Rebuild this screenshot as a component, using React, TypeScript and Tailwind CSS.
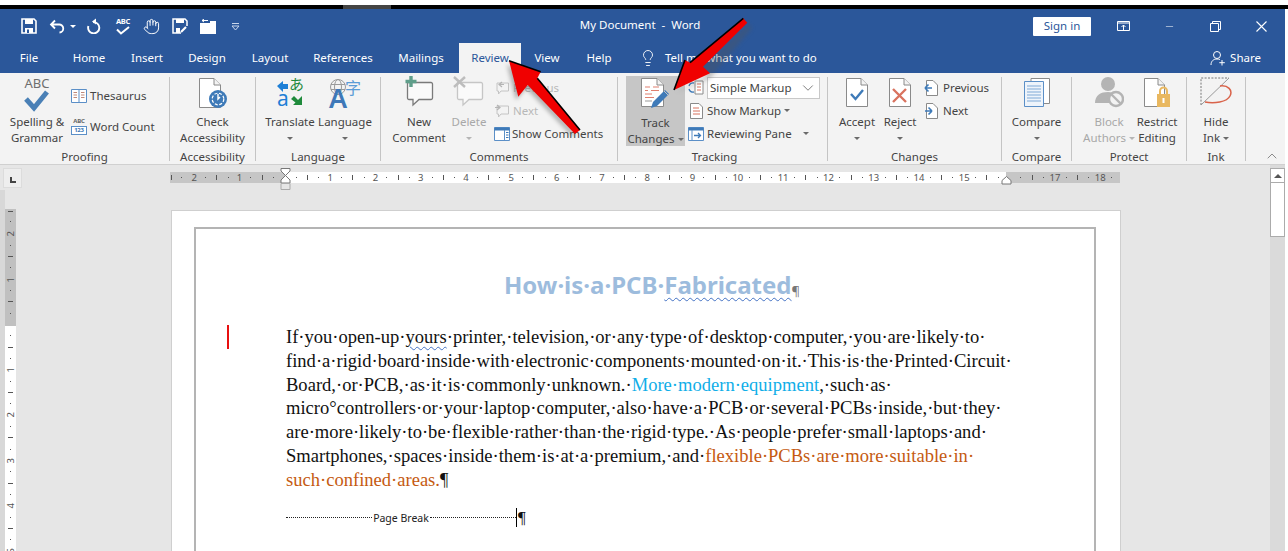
import type { ReactNode } from 'react'
import { Hand, Lightbulb, ChevronDown, ChevronUp, Minus } from 'lucide-react'

// small triangle used on every split button
function Caret({ className = 'border-t-[#6a6a6a]' }: { className?: string }) {
  return <span className={`inline-block h-0 w-0 border-x-[3px] border-t-[3px] border-x-transparent ${className}`} />
}

function Page({ x = 1, w = 24, h = 30, children, stroke = '#8a8a8a' }: { x?: number; w?: number; h?: number; children?: ReactNode; stroke?: string }) {
  return (
    <g>
      <path d={`M${x + .5} .5H${x + w - 7}L${x + w - .5} 7V${h - .5}H${x + .5}Z`} fill="#fff" stroke={stroke} />
      <path d={`M${x + w - 7} .5V7H${x + w - .5}`} fill="#f3f3f3" stroke={stroke} />
      {children}
    </g>
  )
}

function Bubble({ stroke, x = 0, y = 0 }: { stroke: string; x?: number; y?: number }) {
  return <path transform={`translate(${x} ${y})`} d="M1.5 1.5H25a1.5 1.5 0 0 1 1.5 1.5V17a1.5 1.5 0 0 1-1.5 1.5H13L7 24V18.5H3A1.5 1.5 0 0 1 1.5 17Z" fill="#fafafa" stroke={stroke} strokeWidth="1.3" />
}

function SmallBubble({ dir }: { dir: 'prev' | 'next' }) {
  return (
    <svg width="16" height="16" viewBox="0 0 16 16" fill="none">
      <path d="M3 3H14.5V11H7L4.5 14V11H3Z" stroke="#c4c4c4" />
      <path d={dir === 'prev' ? 'M8 2L5 4.5L8 7M5 4.5H10' : 'M3 2L6 4.5L3 7M1 4.5H6'} stroke="#b4b4b4" strokeWidth="1.2" />
    </svg>
  )
}

function BigBtn({ icon, lines, w, caret, disabled, className = '' }: { icon: ReactNode; lines: string[]; w: string; caret?: 'inline' | 'below'; disabled?: boolean; className?: string }) {
  const color = disabled ? 'text-[#a8a8a8]' : 'text-[#444]'
  return (
    <div className={`flex shrink-0 flex-col items-center whitespace-nowrap ${w} ${color} ${className}`}>
      <div className="flex h-[36px] items-start justify-center">{icon}</div>
      {lines.map((l, i) => (
        <div key={l} className="flex h-[16px] items-center gap-[3px] leading-[16px]">
          {l}
          {caret === 'inline' && i === lines.length - 1 && <Caret className={disabled ? 'border-t-[#b5b5b5]' : undefined} />}
        </div>
      ))}
      {caret === 'below' && <div className="flex h-[16px] items-center"><Caret className={disabled ? 'border-t-[#b5b5b5]' : undefined} /></div>}
    </div>
  )
}

function Group({ w, label, children, labelClass = '' }: { w: string; label: string; children: ReactNode; labelClass?: string }) {
  return (
    <div className={`my-[4px] flex h-[84px] shrink-0 flex-col border-r border-[#c4c4c4] ${w}`}>
      <div className="flex h-[72px] shrink-0 pt-[1px]">{children}</div>
      <div className={`flex h-[15px] shrink-0 items-center justify-center leading-[15px] text-[#444] ${labelClass}`}>{label}</div>
    </div>
  )
}

function Row({ icon, children, disabled }: { icon: ReactNode; children: ReactNode; disabled?: boolean }) {
  return (
    <div className={`flex h-[23px] items-center gap-[3px] whitespace-nowrap ${disabled ? 'text-[#b8b8b8]' : 'text-[#444]'}`}>
      <span className="flex w-[16px] shrink-0 justify-center">{icon}</span>
      {children}
    </div>
  )
}

const Dot = () => <span className="flex w-1/4 justify-center"><span className="h-[1px] w-[1px] bg-[#555]" /></span>
const Tick = () => <span className="flex w-1/4 justify-center"><span className="h-[5px] w-[1px] bg-[#555]" /></span>
const VDot = () => <span className="flex h-1/4 items-center justify-center"><span className="h-[1px] w-[1px] bg-[#555]" /></span>
const VTick = () => <span className="flex h-1/4 items-center justify-center"><span className="h-[1px] w-[5px] bg-[#555]" /></span>

const hNums = ['2', '1', '', '1', '2', '3', '4', '5', '6', '7', '8', '9', '10', '11', '12', '13', '14', '15', '', '17']
const vNums = ['2', '1', '', '1', '2', '3', '4', '5']

function HRuler() {
  return (
    <div className="flex h-[11px] w-[950px] items-center bg-[linear-gradient(to_right,#c6c6c6_115px,#fff_115px,#fff_836px,#c6c6c6_836px)] text-[9.5px] leading-[11px] text-[#555]">
      <div className="flex w-[18.6px] shrink-0 items-center justify-between pl-[1px] pr-[7px]"><span className="h-[5px] w-[1px] bg-[#555]" /><span className="h-[1px] w-[1px] bg-[#555]" /></div>
      {hNums.map((n, i) => (
        <div key={i} className="flex w-[45.3px] shrink-0 items-center">
          <span className="w-1/4 text-center">{n}</span><Dot /><Tick /><Dot />
        </div>
      ))}
      {/* last number: the bar stops just past it */}
      <div className="flex w-[25.4px] shrink-0 items-center">
        <span className="w-[11.3px] text-center">18</span><span className="ml-[5px] h-[1px] w-[1px] bg-[#555]" />
      </div>
    </div>
  )
}

function VRuler() {
  return (
    <div className="mt-[19px] h-[400px] w-[11px] bg-[linear-gradient(to_bottom,#c0c0c0_117px,#fff_117px)] text-[9.5px] leading-[11px] text-[#555]">
      <div className="flex h-[19.3px] flex-col justify-between pb-[6px] pt-[2px]"><span className="mx-auto h-[1px] w-[5px] bg-[#555]" /><span className="mx-auto h-[1px] w-[1px] bg-[#555]" /></div>
      {vNums.map((n, i) => (
        <div key={i} className="flex h-[45.3px] flex-col">
          <span className="flex h-1/4 -rotate-90 items-center justify-center">{n}</span><VDot /><VTick /><VDot />
        </div>
      ))}
    </div>
  )
}

const wavy = 'underline decoration-wavy decoration-[#4472c4] decoration-1 underline-offset-[3px]'

export default function App() {
  return (
    <div className="relative h-[551px] w-[1288px] overflow-hidden bg-white font-['Noto_Sans',sans-serif] text-[11.5px]">
      <div className="mt-[5px] flex h-[4px] bg-black"><div className="ml-[343px] w-[48px] bg-[#444]" /></div>

      <div className="w-[1285px]">
        {/* title bar */}
        <div className="flex h-[34px] items-center bg-[#2b579a] text-white">
          <div className="ml-[21px] flex w-[224px] shrink-0 items-center">
            <svg width="16" height="16" viewBox="0 0 16 16" fill="none"><path d="M1 1H13L15 3V15H1Z" stroke="#fff" strokeWidth="1.6" /><path d="M4 1H12V6H4Z" fill="#fff" /><path d="M4 10H12V15H4Z" fill="#fff" /><path d="M6 11.5H8V15H6Z" fill="#2b579a" /></svg>
            <svg className="ml-[12px]" width="16" height="16" viewBox="0 0 16 16" fill="none"><path d="M6 2.5L2 6.5L6 10.5M2 6.5H10A4 4 0 0 1 10.5 14.5" stroke="#fff" strokeWidth="1.8" /></svg>
            <span className="ml-[5px] flex"><Caret className="border-t-white" /></span>
            <svg className="ml-[10px]" width="16" height="16" viewBox="0 0 16 16" fill="none"><path d="M7 4.2A5.6 5.6 0 1 1 2.4 8" stroke="#fff" strokeWidth="1.9" /><path d="M10 .5V6.5L6 3.5Z" fill="#fff" /></svg>
            <div className="ml-[14px] flex h-[18px] w-[14px] flex-col items-center">
              <span className="text-[7.5px] font-bold leading-[9px] tracking-[-0.3px]">ABC</span>
              <svg width="14" height="9" viewBox="0 0 14 9" fill="none"><path d="M1 3.5L5 7.5L13 1" stroke="#fff" strokeWidth="2" /></svg>
            </div>
            <Hand className="ml-[13px]" size={17} strokeWidth={1.4} />
            <svg className="ml-[12px]" width="16" height="16" viewBox="0 0 16 16" fill="none"><path d="M9 15H1V1H13L15 3V8" stroke="#fff" strokeWidth="1.5" /><path d="M4 1H12V5H4Z" fill="#fff" /><path d="M4 10H8V15H4Z" fill="#fff" /><path d="M9 14L14 9" stroke="#fff" strokeWidth="2.2" /></svg>
            <svg className="ml-[12px]" width="16" height="15" viewBox="0 0 16 15" fill="none"><path d="M0 4H16V15H0Z" fill="#fff" /><path d="M8 1.5H2M4 0L2 1.5L4 3" stroke="#fff" /><path d="M10 2H16V4H10Z" fill="#fff" /></svg>
            <svg className="ml-[15px]" width="9" height="9" viewBox="0 0 9 9" fill="none"><path d="M1 1.5H8" stroke="#c9d6ea" /><path d="M1 4L4.5 8L8 4Z" stroke="#c9d6ea" /></svg>
          </div>
          <div className="ml-[333px] w-[124px] -translate-y-[1px] whitespace-pre text-center">My Document  -  Word</div>
          <div className="ml-[331px] flex h-[19px] w-[58px] items-center justify-center rounded-[1px] bg-white text-[#2b579a]">Sign in</div>
          <svg className="ml-[26px]" width="13" height="10" viewBox="0 0 13 10" fill="none"><path d="M.5 .5H12.5V9.5H.5Z" stroke="#fff" /><path d="M.5 2H12.5" stroke="#fff" /><path d="M6.5 9V4M4.5 6L6.5 4L8.5 6" stroke="#fff" /></svg>
          <Minus className="ml-[34px]" size={11} strokeWidth={1.2} />
          <svg className="ml-[35px]" width="11" height="11" viewBox="0 0 11 11" fill="none"><path d="M.5 2.5H8.5V10.5H.5Z" stroke="#fff" /><path d="M2.5 2.5V.5H10.5V8.5H8.5" stroke="#fff" /></svg>
          <svg className="ml-[35px]" width="11" height="11" viewBox="0 0 11 11" fill="none"><path d="M.5 .5L10.5 10.5M10.5 .5L.5 10.5" stroke="#fff" strokeWidth="1.1" /></svg>
        </div>

        {/* tabs */}
        <div className="flex h-[30px] items-stretch bg-[#2b579a] text-white">
          {[['File', 'w-[58px]'], ['Home', 'w-[62px]'], ['Insert', 'w-[54px]'], ['Design', 'w-[66px]'], ['Layout', 'w-[60px]'], ['References', 'w-[86px]'], ['Mailings', 'w-[70px]']].map(([t, w]) => (
            <div key={t} className={`flex items-center justify-center ${w}`}>{t}</div>
          ))}
          <div className="ml-[3px] flex w-[62px] items-center justify-center bg-[#f3f3f3] text-[#2b579a]">Review</div>
          <div className="flex w-[52px] items-center justify-center">View</div>
          <div className="flex w-[52px] items-center justify-center">Help</div>
          <div className="ml-[14px] flex items-center gap-[8px]">
            <Lightbulb size={18} strokeWidth={1.2} />
            <span>Tell me what you want to do</span>
          </div>
          <div className="ml-auto mr-[24px] flex items-center gap-[4px]">
            <svg width="16" height="16" viewBox="0 0 16 16" fill="none"><circle cx="7" cy="5" r="3.5" stroke="#fff" /><path d="M1 15C1 11 3.5 9 7 9C8 9 9 9.2 9.8 9.6" stroke="#fff" /><path d="M12 10V15.5M9.3 12.7H14.8" stroke="#fff" /></svg>
            <span>Share</span>
          </div>
        </div>

        {/* ribbon */}
        <div className="flex h-[92px] border-b border-[#d0d0d0] bg-[#f3f3f3]">
          <Group w="w-[170px]" label="Proofing">
            <BigBtn w="w-[74px]" lines={['Spelling &', 'Grammar']} icon={
              <div className="-mt-[1px] flex w-[30px] flex-col items-center">
                <span className="text-[13px] leading-[13px] text-[#6e6e6e]">ABC</span>
                <svg width="26" height="22" viewBox="0 0 26 22" fill="none"><path d="M2 9L10 18L23 2" stroke="#4a80b6" strokeWidth="5" /></svg>
              </div>
            } />
            <div className="-ml-[3px] flex flex-col gap-[8px] pt-[6px]">
              <Row icon={
                <svg width="16" height="14" viewBox="0 0 16 14" fill="none"><path d="M.5 .5H15.5V13.5H.5Z" fill="#fff" stroke="#5b8fc7" /><path d="M8 1V13" stroke="#5b8fc7" /><path d="M2.5 3.5H6M2.5 6H6M2.5 8.5H6M10 3.5H13.5M10 6H13.5M10 8.5H13.5" stroke="#c08a7a" /></svg>
              }>Thesaurus</Row>
              <Row icon={
                <div className="flex w-[16px] flex-col items-center">
                  <span className="text-[6px] font-bold leading-[7px] tracking-[-0.2px] text-[#666]">ABC</span>
                  <span className="mt-[1px] w-[16px] border border-[#5b8fc7] bg-white text-center text-[6px] font-bold leading-[7px] tracking-[-0.2px] text-[#3a76b5]">123</span>
                </div>
              }>Word Count</Row>
            </div>
          </Group>

          <Group w="w-[86px]" label="Accessibility">
            <BigBtn w="w-[85px]" lines={['Check', 'Accessibility']} icon={
              <svg width="30" height="30" viewBox="0 0 30 30" fill="none">
                <Page w={22}><circle cx="20" cy="21" r="9" fill="#3e7ab8" /><circle cx="20" cy="21" r="5.8" stroke="#fff" strokeWidth="1.2" strokeDasharray="3 1.6" /><path d="M20 16V21L22 19" stroke="#fff" strokeWidth="1.4" /></Page>
              </svg>
            } />
          </Group>

          <Group w="w-[125px]" label="Language">
            <BigBtn className="ml-[6px]" w="w-[56px]" lines={['Translate']} caret="below" icon={
              <div className="relative h-[32px] w-[28px] font-['Noto_Sans_CJK_JP',sans-serif]">
                <span className="absolute left-[13px] top-[-2px] text-[15px] leading-[16px] text-[#1f8a3b]">あ</span>
                <span className="absolute left-[1px] top-[9px] font-['Noto_Sans',sans-serif] text-[21px] leading-[22px] text-[#1e7fd6]">a</span>
                <svg className="absolute left-0 top-0" width="28" height="32" viewBox="0 0 28 32"><path d="M1 8L7 3V6H12V11H7V14Z" fill="#1e7fd6" /><path d="M26 18V27H17L19.5 24.5L15 21L18 18L22 22Z" fill="#1f8a3b" /></svg>
              </div>
            } />
            <BigBtn w="w-[54px]" lines={['Language']} caret="below" icon={
              <div className="relative h-[32px] w-[32px] font-['Noto_Sans_CJK_SC',sans-serif]">
                <svg className="absolute left-0 top-0" width="18" height="18" viewBox="0 0 18 18" fill="none"><circle cx="9" cy="9" r="7.5" stroke="#9a9a9a" /><ellipse cx="9" cy="9" rx="3.5" ry="7.5" stroke="#9a9a9a" /><path d="M2 6.5H16M2 11.5H16" stroke="#9a9a9a" /></svg>
                <span className="absolute left-[16px] top-[0px] text-[16px] leading-[18px] text-[#5a9bd6]">字</span>
                <span className="absolute left-[0px] top-[6px] font-['Noto_Sans',sans-serif] text-[27px] font-semibold leading-[28px] text-[#3e78b8]">A</span>
              </div>
            } />
          </Group>

          <Group w="w-[237px]" label="Comments">
            <BigBtn w="w-[76px]" lines={['New', 'Comment']} icon={
              <svg className="-mt-[3px]" width="32" height="32" viewBox="0 0 32 32" fill="none"><Bubble stroke="#7a7a7a" x={3} y={6} /><path d="M8 1V12M2.5 6.5H13.5" stroke="#5f9e8a" strokeWidth="3.4" /></svg>
            } />
            <BigBtn w="w-[24px]" disabled lines={['Delete']} caret="below" icon={
              <svg className="-mt-[3px]" width="32" height="32" viewBox="0 0 32 32" fill="none"><Bubble stroke="#c6c6c6" x={3} y={6} /><path d="M1 2L12 12M12 2L1 12" stroke="#bdbdbd" strokeWidth="2.4" /></svg>
            } />
            <div className="ml-[13px] flex -translate-y-[2px] flex-col">
              <Row disabled icon={<SmallBubble dir="prev" />}>Previous</Row>
              <Row disabled icon={<SmallBubble dir="next" />}>Next</Row>
              <Row icon={
                <svg width="16" height="14" viewBox="0 0 16 14" fill="none"><path d="M.5 .5H15.5V13.5H.5Z" fill="#fff" stroke="#5b8fc7" /><path d="M.5 2H15.5" stroke="#3e7ab8" strokeWidth="3" /><path d="M10.5 3V13" stroke="#5b8fc7" /><path d="M12 5.5H14.5M12 8H14.5M12 10.5H14.5" stroke="#3e7ab8" /></svg>
              }><span className="-ml-[1px]">Show Comments</span></Row>
            </div>
          </Group>

          <Group w="w-[210px]" label="Tracking" labelClass="pr-[16px]">
            <div className="ml-[8px] -mt-[2px] h-[70px] w-[59px] shrink-0 bg-[#c6c6c6] pt-[3px]">
              <BigBtn w="w-[59px]" lines={['Track', 'Changes']} caret="inline" icon={
                <svg className="-mt-[1px]" width="32" height="32" viewBox="0 0 32 32" fill="none">
                  <Page x={1} w={23} h={29}>
                    <path d="M5 9H10M13 9H19M5 12.5H8M11 12.5H19M5 16H12M5 19.5H14" stroke="#e08070" strokeWidth="1.2" />
                    <path d="M5 23H12" stroke="#aaa" strokeWidth="1.2" />
                  </Page>
                  <path d="M11 30L13 24L25 12L29 16L17 28Z" fill="#3e7ab8" />
                  <path d="M24 13L28 17" stroke="#c6c6c6" />
                </svg>
              } />
            </div>
            <div className="ml-[3px] flex -translate-y-[2px] flex-col">
              <div className="flex h-[23px] items-center gap-[3px] whitespace-nowrap text-[#444]">
                <svg width="16" height="16" viewBox="0 0 16 16" fill="none"><path d="M7 1H15V14H7Z" fill="#fff" stroke="#8a8a8a" /><path d="M9 4H13M9 7H13M9 10H13" stroke="#d9735f" /><path d="M1 6A4 4 0 0 1 6 3M6 12A4 4 0 0 1 1 9" stroke="#3e7ab8" strokeWidth="1.3" /></svg>
                <div className="flex h-[22px] w-[113px] items-center justify-between border border-[#c8c8c8] bg-white pl-[2px] pr-[2px]">
                  Simple Markup <ChevronDown size={18} strokeWidth={1} className="text-[#555]" />
                </div>
              </div>
              <Row icon={
                <svg width="13" height="16" viewBox="0 0 13 16" fill="none"><path d="M.5 .5H9L12.5 4V15.5H.5Z" fill="#fff" stroke="#8a8a8a" /><path d="M3 5H9M3 8H10M3 11H10" stroke="#d9735f" /></svg>
              }>Show Markup <Caret /></Row>
              <Row icon={
                <svg width="16" height="14" viewBox="0 0 16 14" fill="none"><path d="M.5 .5H15.5V13.5H.5Z" fill="#fff" stroke="#5b8fc7" /><path d="M.5 2H15.5" stroke="#3e7ab8" strokeWidth="3" /><path d="M4 3V13" stroke="#5b8fc7" /><path d="M6 8.5H12M10 6L12.5 8.5L10 11" stroke="#3e7ab8" strokeWidth="1.3" /></svg>
              }>Reviewing Pane <span className="ml-[8px] flex"><Caret /></span></Row>
            </div>
          </Group>

          <Group w="w-[174px]" label="Changes">
            <BigBtn w="w-[58px]" lines={['Accept']} caret="below" icon={
              <svg width="24" height="30" viewBox="0 0 24 30" fill="none"><Page x={1} w={22} h={29}><path d="M6 16L10.5 21L18 12" stroke="#3e7ab8" strokeWidth="2.4" /></Page></svg>
            } />
            <BigBtn w="w-[28px]" lines={['Reject']} caret="below" icon={
              <svg width="24" height="30" viewBox="0 0 24 30" fill="none"><Page x={1} w={22} h={29}><path d="M5 11L18 24M18 11L5 24" stroke="#d9735f" strokeWidth="2.4" /></Page></svg>
            } />
            <div className="ml-[9px] flex -translate-y-[2px] flex-col">
              <Row icon={
                <svg width="14" height="16" viewBox="0 0 14 16" fill="none"><path d="M2.5 .5H9L13.5 5V15.5H2.5Z" fill="#fff" stroke="#8a8a8a" /><path d="M1 8H8M1 8L4.5 4.5M1 8L4.5 11.5" stroke="#3e7ab8" strokeWidth="1.6" /></svg>
              }><span className="ml-[1px]">Previous</span></Row>
              <Row icon={
                <svg width="14" height="16" viewBox="0 0 14 16" fill="none"><path d="M2.5 .5H9L13.5 5V15.5H2.5Z" fill="#fff" stroke="#8a8a8a" /><path d="M1 8H8M8 8L4.5 4.5M8 8L4.5 11.5" stroke="#3e7ab8" strokeWidth="1.6" /></svg>
              }><span className="ml-[1px]">Next</span></Row>
            </div>
          </Group>

          <Group w="w-[70px]" label="Compare">
            <BigBtn w="w-[69px]" lines={['Compare']} caret="below" icon={
              <svg width="26" height="30" viewBox="0 0 26 30" fill="none"><path d="M7 .5H25.5V25.5H7Z" fill="#fff" stroke="#8a8a8a" /><path d="M.5 3.5H19.5V28.5H.5Z" fill="#eef4fb" stroke="#5b8fc7" /><path d="M3 8H17M3 11H17M3 14H17M3 17H17M3 20H17M3 23H17" stroke="#7fa9d6" /></svg>
            } />
          </Group>

          <Group w="w-[115px]" label="Protect">
            <BigBtn w="w-[74px]" disabled lines={['Block', 'Authors']} caret="inline" icon={
              <svg className="-mt-[2px]" width="30" height="32" viewBox="0 0 30 32" fill="none"><circle cx="14" cy="8" r="7" fill="#b4b4b4" /><path d="M1 27C1 19 7 16 14 16C20 16 24 19 24 27Z" fill="#b4b4b4" /><circle cx="22" cy="23" r="7" fill="#f3f3f3" stroke="#b4b4b4" strokeWidth="2.4" /><path d="M17 18L27 28" stroke="#b4b4b4" strokeWidth="2.4" /></svg>
            } />
            <BigBtn w="w-[22px]" lines={['Restrict', 'Editing']} icon={
              <svg width="28" height="30" viewBox="0 0 28 30" fill="none"><Page x={1} w={21} h={29} /><path d="M14 16H27V29H14Z" fill="#e9b860" /><path d="M17 16V13A3.5 3.5 0 0 1 24 13V16" stroke="#e9b860" strokeWidth="2" /><path d="M20.5 20V25" stroke="#fff" strokeWidth="2" /></svg>
            } />
          </Group>

          <Group w="w-[59px]" label="Ink">
            <BigBtn w="w-[58px]" lines={['Hide', 'Ink']} caret="inline" icon={
              <svg className="-mt-[1px]" width="32" height="30" viewBox="0 0 32 30" fill="none"><path d="M1 28V1H29" stroke="#777" strokeDasharray="2 1.4" /><path d="M29 1L1 28" stroke="#999" /><path d="M20 9C28 8 33 13 30 19C27 25 14 27 5 25" stroke="#d9634a" strokeWidth="1.5" /></svg>
            } />
          </Group>
          <div className="flex flex-1 items-end justify-end pb-[0px] pr-[5px]"><ChevronUp size={16} strokeWidth={1} className="text-[#555]" /></div>
        </div>

        {/* document area */}
        <div className="flex h-[386px] bg-[#e6e6e6]">
          <div className="flex w-[1270px] flex-col">
            <div className="flex h-[25px] shrink-0 items-center">
              <div className="ml-[3px] flex h-[20px] w-[19px] items-end justify-center border border-[#dcdcdc] bg-[#eeeeee] pb-[4px]">
                <span className="h-[6px] w-[6px] border-b-2 border-l-2 border-[#444]" />
              </div>
              <div className="ml-[148px]"><HRuler /></div>
            </div>
            <div className="flex min-h-0 flex-1">
              <div className="ml-0 flex w-[5px] bg-[#d8d8d8]" />
              <VRuler />
              <div className="ml-[155px] mt-[20px] h-[400px] w-[950px] shrink-0 border border-[#cfcfcf] bg-white pl-[22px] pt-[16px]">
                <div className="h-[400px] w-[902px] border-l-2 border-r-2 border-t-2 border-[#b4b4b4] pl-[90px] pr-[10px] pt-[41px]">
                  <h1 className="-ml-[90px] -mr-[10px] pl-[14px] text-center text-[24px] font-bold leading-[30px] text-[#9dbcdd]">
                    How·is·a·PCB·<span className={wavy}>Fabricated</span><span className="align-[-2px] text-[13px] font-normal text-[#777]">¶</span>
                  </h1>
                  <p className="relative mt-[19px] whitespace-nowrap font-['Liberation_Serif',serif] text-[18.56px] leading-[23.8px] text-[#111]">
                    <span className="absolute -left-[59px] top-0 h-[24px] w-[1.5px] bg-[#e81010]" />
                    If·you·open-up·<span className={wavy}>yours</span>·printer,·television,·or·any·type·of·desktop·computer,·you·are·likely·to·<br />
                    find·a·rigid·board·inside·with·electronic·components·mounted·on·it.·This·is·the·Printed·Circuit·<br />
                    Board,·or·PCB,·as·it·is·commonly·unknown.·<span className="text-[#10aee8]">More·modern·equipment</span>,·such·as·<br />
                    micro°controllers·or·your·laptop·computer,·also·have·a·PCB·or·several·PCBs·inside,·but·they·<br />
                    are·more·likely·to·be·flexible·rather·than·the·rigid·type.·As·people·prefer·small·laptops·and·<br />
                    Smartphones,·spaces·inside·them·is·at·a·premium,·and·<span className="text-[#c55a11]">flexible·PCBs·are·more·suitable·in·</span><br />
                    <span className="text-[#c55a11]">such·confined·areas.</span>¶
                  </p>
                  <div className="mt-[18px] flex h-[16px] items-center font-['Noto_Sans',sans-serif] text-[10.5px] leading-[16px] text-[#222]">
                    <span className="w-[86px] border-t border-dotted border-[#222]" />
                    <span className="w-[58px] whitespace-nowrap text-center">Page Break</span>
                    <span className="w-[86px] border-t border-dotted border-[#222]" />
                    <span className="h-[19px] w-[1px] bg-black" />
                    <span className="ml-[1px] font-['Liberation_Serif',serif] text-[17px] text-[#111]">¶</span>
                  </div>
                </div>
              </div>
            </div>
          </div>
          <div className="w-[15px] shrink-0 bg-[#dadada] pt-[3px]">
            <div className="flex h-[15px] items-center justify-center border border-[#ababab] bg-white"><span className="h-0 w-0 border-x-[4px] border-b-[4px] border-x-transparent border-b-[#555]" /></div>
            <div className="h-[54px] border border-t-0 border-[#ababab] bg-white" />
          </div>
        </div>
      </div>

      {/* indent markers on the ruler */}
      <svg className="absolute left-[279px] top-[168px]" width="13" height="22" viewBox="0 0 13 22" fill="none"><path d="M2 .5H11V3L6.5 7.5L2 3ZM6.5 7.5L11 12V15H2V12Z" fill="#fff" stroke="#777" /><path d="M2 15.5H11V21.5H2Z" fill="#e6e6e6" stroke="#aaa" /></svg>
      <svg className="absolute left-[1000px] top-[176px]" width="13" height="9" viewBox="0 0 13 9" fill="none"><path d="M6.5 .5L11 4.5V8H2V4.5Z" fill="#fff" stroke="#777" /></svg>

      {/* red callout arrows */}
      <svg className="pointer-events-none absolute left-0 top-0" width="1288" height="551" viewBox="0 0 1288 551">
        <defs><filter id="soft" x="-20%" y="-20%" width="140%" height="140%"><feGaussianBlur stdDeviation="2" /></filter></defs>
        <path d="M507 64L516 100L526 88L572 136L576 134L531 84Z" fill="#555" opacity="0.45" filter="url(#soft)" />
        <path d="M675 93L707 76L700 69L748 24L752 28L710 78Z" fill="#555" opacity="0.35" filter="url(#soft)" />
        <path d="M509 60.7L540.7 71.7L537.3 78.3L580 130L575 134L527.7 85L518.3 96.7Z" fill="#f00000" />
        <path d="M509 60.7L540.7 71.7M537.3 78.3L580 130" stroke="#000" strokeWidth="1.6" fill="none" />
        <path d="M674 90L685 60L690 62.7L743.3 18.3L747.3 22.7L703 66.7L710 73.3Z" fill="#f00000" />
        <path d="M674 90L685 60M690 62.7L743.3 18.3" stroke="#000" strokeWidth="1.6" fill="none" />
      </svg>
    </div>
  )
}
